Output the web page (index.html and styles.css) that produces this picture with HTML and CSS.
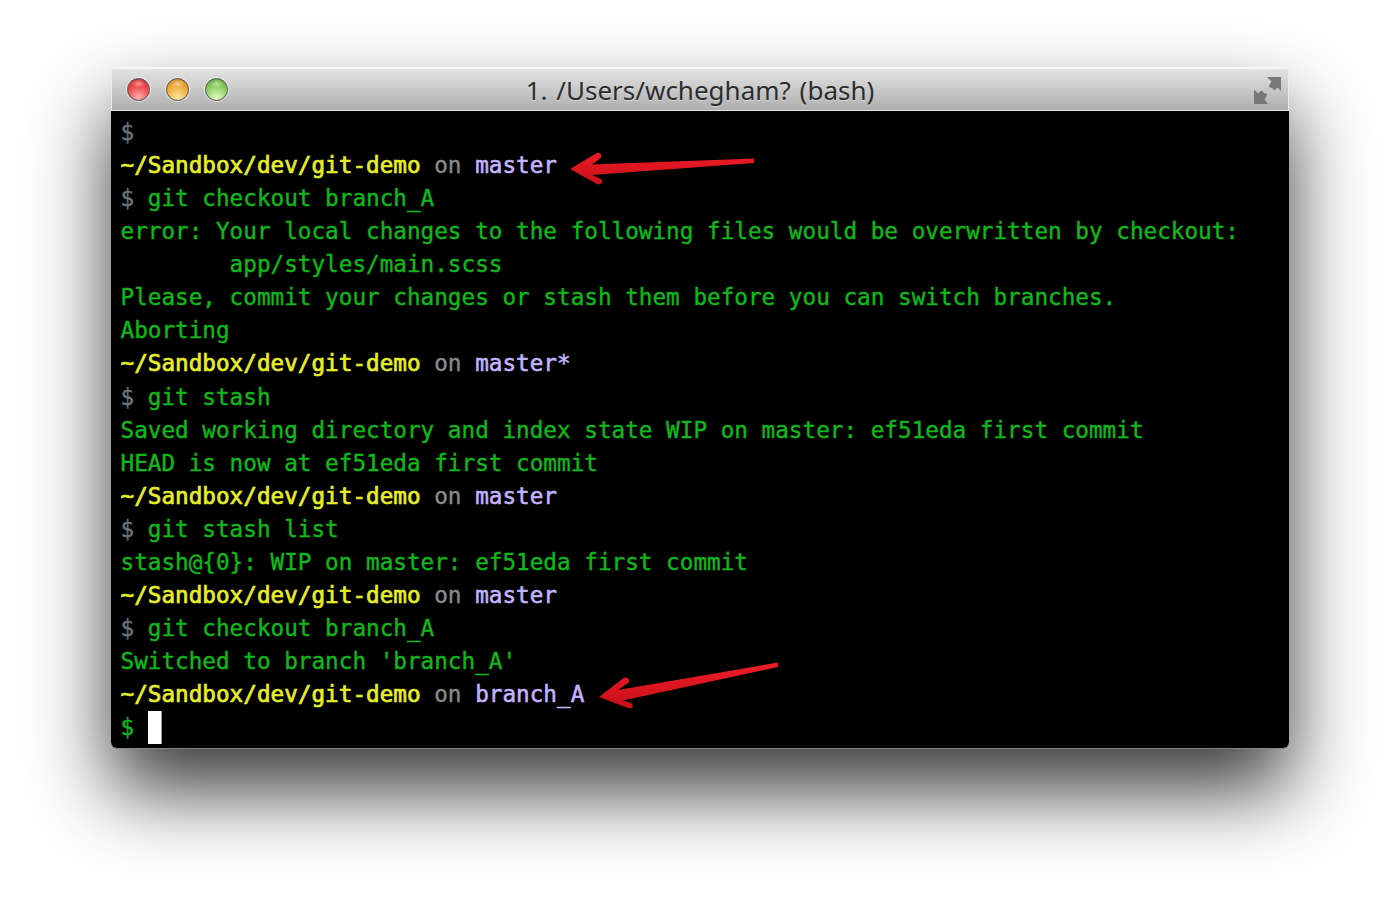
FILE: index.html
```html
<!DOCTYPE html>
<html lang="en">
<head>
<meta charset="utf-8">
<title>Terminal</title>
<link rel="stylesheet" href="styles.css">
</head>
<body>
<div class="window">
  <div class="titlebar">
    <div class="lights">
      <span class="light red"></span>
      <span class="light amber"></span>
      <span class="light green"></span>
    </div>
    <div class="title">1. /Users/wchegham? (bash)</div>
    <svg class="resize" width="30" height="30" viewBox="0 0 30 30">
      <path d="M14 1H28V15L24.500 11.500C23 13.500 21.500 14.500 20.500 14C20 12.500 18.500 11 16.500 11.500C15.500 10.500 16 9 18.500 5.500Z" fill="#777"/>
      <path d="M1 13.500L5 17.500C7 15.500 8.500 14.500 9.500 15C10 16.500 11.500 18 13.500 17.500C14.500 18.500 14 20 11.500 23.500L15 28H1Z" fill="#777"/>
    </svg>
  </div>
  <div class="screen">
<pre class="term"><span class="dim">$</span>
<span class="path">~/Sandbox/dev/git-demo</span> <span class="on">on</span> <span class="branch">master</span>
<span class="dim">$</span> <span class="out">git checkout branch_A</span>
<span class="out">error: Your local changes to the following files would be overwritten by checkout:</span>
<span class="out">        app/styles/main.scss</span>
<span class="out">Please, commit your changes or stash them before you can switch branches.</span>
<span class="out">Aborting</span>
<span class="path">~/Sandbox/dev/git-demo</span> <span class="on">on</span> <span class="branch">master*</span>
<span class="dim">$</span> <span class="out">git stash</span>
<span class="out">Saved working directory and index state WIP on master: ef51eda first commit</span>
<span class="out">HEAD is now at ef51eda first commit</span>
<span class="path">~/Sandbox/dev/git-demo</span> <span class="on">on</span> <span class="branch">master</span>
<span class="dim">$</span> <span class="out">git stash list</span>
<span class="out">stash@{0}: WIP on master: ef51eda first commit</span>
<span class="path">~/Sandbox/dev/git-demo</span> <span class="on">on</span> <span class="branch">master</span>
<span class="dim">$</span> <span class="out">git checkout branch_A</span>
<span class="out">Switched to branch 'branch_A'</span>
<span class="path">~/Sandbox/dev/git-demo</span> <span class="on">on</span> <span class="branch">branch_A</span>
<span class="out">$</span> <span class="cursor"></span></pre>
    <svg class="arrow arrow-top" width="190" height="36" viewBox="0 0 190 36">
      <defs>
        <linearGradient id="redA" x1="0" y1="0" x2="0" y2="1">
          <stop offset="0" stop-color="#ee1c28"/>
          <stop offset="1" stop-color="#c81019"/>
        </linearGradient>
      </defs>
      <path d="M0 17L27 1C30 -0.500 33 4 30 6.500L22 12.500L184 6.500V11L22 23L31 27C34 30 31 33.500 27 32Z" fill="url(#redA)"/>
    </svg>
    <svg class="arrow arrow-bottom" width="184" height="48" viewBox="0 0 184 48">
      <path d="M0 35L24 16.500C28 13.500 32 18 29 21L19 28L179 0.500V5L24 38.500L32 41C36 44 33 47.500 29 46Z" fill="url(#redA)"/>
    </svg>
  </div>
</div>
</body>
</html>
```
FILE: styles.css
```css
html, body {
  margin: 0;
  height: 100%;
  background: #fff;
  overflow: hidden;
}

body {
  padding: 67px 111px 0;
  box-sizing: border-box;
}

.window {
  width: 1178px;
  height: 681px;
  display: flex;
  flex-direction: column;
  border-radius: 6px;
  box-shadow: 0 1px 0 #858585, 0 42px 80px rgba(0, 0, 0, 0.78);
  overflow: hidden;
}

.titlebar {
  height: 44px;
  flex: none;
  display: flex;
  align-items: center;
  padding: 0 16px;
  position: relative;
  box-sizing: border-box;
  background: linear-gradient(#e2e2e2, #d8d8d8 20%, #afafaf);
  border-top: 2px solid #f6f6f6;
  border-bottom: 1px solid #e4e4e4;
  box-shadow: inset 1px 0 #ececec, inset -1px 0 #ececec;
}

.lights {
  display: flex;
  gap: 16px;
}

.light {
  width: 23px;
  height: 23px;
  border-radius: 50%;
  box-sizing: border-box;
  border: 1px solid #555;
  box-shadow: 0 0 0 1px rgba(255, 255, 255, 0.55);
}

.red {
  background:
    radial-gradient(ellipse 7px 4px at 50% 22%, rgba(255, 255, 255, 0.45), transparent),
    radial-gradient(circle at 50% 88%, #ffb0b0 0, #ec4a4d 55%, #c22a30 100%);
}

.amber {
  background:
    radial-gradient(ellipse 7px 4px at 50% 22%, rgba(255, 255, 255, 0.45), transparent),
    radial-gradient(circle at 50% 88%, #ffe69a 0, #eeaa3e 55%, #c67f18 100%);
}

.green {
  background:
    radial-gradient(ellipse 7px 4px at 50% 22%, rgba(255, 255, 255, 0.45), transparent),
    radial-gradient(circle at 50% 88%, #e0f8c0 0, #8ecf62 55%, #4e9636 100%);
}

.title {
  position: absolute;
  left: 0;
  right: 0;
  top: 3px;
  text-align: center;
  font: 26px/36px "Noto Sans", sans-serif;
  word-spacing: 2px;
  color: #2c2c2c;
  text-shadow: 0 1px 0 rgba(255, 255, 255, 0.45);
}

.resize {
  position: absolute;
  right: 6px;
  top: 7px;
}

.screen {
  flex: 1;
  background: #000;
  padding: 5px 0 0 9.500px;
  position: relative;
  min-height: 0;
}

.term {
  margin: 0;
  font-family: "DejaVu Sans Mono", monospace;
  font-size: 22.67px;
  line-height: 33.06px;
  -webkit-text-stroke: 0.4px currentColor;
}

.dim {
  color: #6d757b;
}

.out {
  color: #10b81b;
}

.path {
  color: #e6ee2a;
  -webkit-text-stroke: 0.7px currentColor;
}

.on {
  color: #8a8a8a;
}

.branch {
  color: #c4b2ff;
  -webkit-text-stroke: 0.55px currentColor;
}

.cursor {
  display: inline-block;
  width: 14px;
  height: 33px;
  background: #fff;
  border-right: 1px solid #999;
  box-sizing: border-box;
  vertical-align: top;
}

.arrow {
  position: absolute;
}

.arrow-top {
  left: 459px;
  top: 41px;
}

.arrow-bottom {
  left: 488px;
  top: 551px;
}
```
